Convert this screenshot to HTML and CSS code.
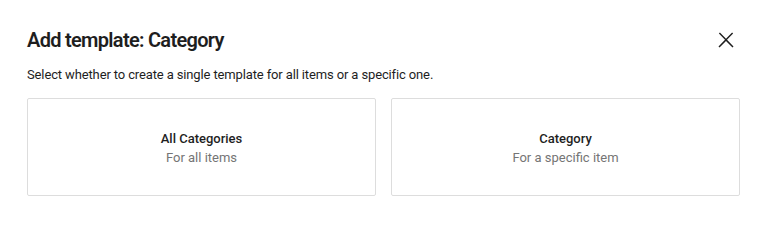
FILE: index.html
```html
<!DOCTYPE html>
<html lang="en">
<head>
<meta charset="utf-8">
<link rel="stylesheet" href="styles.css">
</head>
<body>
<div class="modal">
  <div class="header">
    <h1 class="title">Add template: Category</h1>
    <button class="close" aria-label="Close">
      <svg width="24" height="24" viewBox="0 0 24 24"><path d="M13 11.8l6.1-6.3-1-1-6.1 6.2-6.1-6.2-1 1 6.1 6.3-6.5 6.7 1 1 6.5-6.6 6.5 6.6 1-1z" fill="#1e1e1e"/></svg>
    </button>
  </div>
  <p class="desc">Select whether to create a single template for all items or a specific one.</p>
  <div class="options">
    <button class="card">
      <span class="card-title">All Categories</span>
      <span class="card-sub">For all items</span>
    </button>
    <button class="card">
      <span class="card-title">Category</span>
      <span class="card-sub">For a specific item</span>
    </button>
  </div>
</div>
</body>
</html>
```

FILE: styles.css
```css
html, body {
  margin: 0;
  padding: 0;
  background: #fff;
}
body {
  font-family: Roboto, "Liberation Sans", Arial, sans-serif;
  color: #1e1e1e;
}
.modal {
  padding: 24px 28px 0 27px;
}
.header {
  display: flex;
  align-items: center;
  justify-content: space-between;
  height: 32px;
}
.title {
  margin: 0;
  font-size: 20px;
  line-height: 24px;
  font-weight: 600;
  letter-spacing: -0.7px;
  color: #1e1e1e;
}
.close {
  width: 24px;
  height: 24px;
  padding: 0;
  margin-right: 2px;
  border: 0;
  background: none;
  display: flex;
}
.desc {
  margin: 9px 0 0;
  font-size: 13px;
  line-height: 20px;
  letter-spacing: -0.13px;
}
.options {
  display: grid;
  grid-template-columns: 1fr 1fr;
  gap: 15px;
  margin-top: 13px;
}
.card {
  height: 98px;
  border: 1px solid #dddddd;
  border-radius: 2px;
  background: #fff;
  display: flex;
  flex-direction: column;
  align-items: center;
  justify-content: center;
  font-family: inherit;
  padding: 2px 0 0;
  gap: 1px;
}
.card-title {
  font-size: 13px;
  line-height: 18px;
  font-weight: 500;
  color: #1e1e1e;
}
.card-sub {
  font-size: 13px;
  line-height: 18px;
  color: #757575;
}
```
